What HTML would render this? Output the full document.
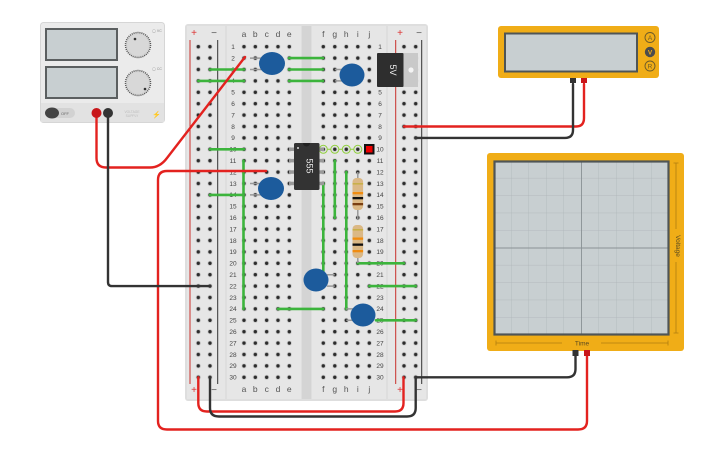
<!DOCTYPE html>
<html><head><meta charset="utf-8"><style>
html,body{margin:0;padding:0;background:#fff;}
svg{display:block;font-family:"Liberation Sans",sans-serif;}
</style></head><body>
<svg width="725" height="453" viewBox="0 0 725 453" xmlns="http://www.w3.org/2000/svg">
<defs>
<pattern id="pL" x="238.33" y="41" width="11.33" height="11.4" patternUnits="userSpaceOnUse"><circle cx="5.67" cy="5.7" r="2.6" fill="#d0d0d0"/><circle cx="5.67" cy="5.7" r="1.7" fill="#2b2b2b"/></pattern>
<pattern id="pR" x="317.55" y="41" width="11.5" height="11.4" patternUnits="userSpaceOnUse"><circle cx="5.75" cy="5.7" r="2.6" fill="#d0d0d0"/><circle cx="5.75" cy="5.7" r="1.7" fill="#2b2b2b"/></pattern>
<pattern id="pRail" x="192.45" y="41" width="11.7" height="11.4" patternUnits="userSpaceOnUse"><circle cx="5.85" cy="5.7" r="2.6" fill="#d0d0d0"/><circle cx="5.85" cy="5.7" r="1.7" fill="#2b2b2b"/></pattern>
<pattern id="pRail2" x="398.15" y="41" width="11.7" height="11.4" patternUnits="userSpaceOnUse"><circle cx="5.85" cy="5.7" r="2.6" fill="#d0d0d0"/><circle cx="5.85" cy="5.7" r="1.7" fill="#2b2b2b"/></pattern>
<pattern id="grid" x="494" y="161" width="17.5" height="17.4" patternUnits="userSpaceOnUse"><path d="M17.5 0V17.4M0 17.4H17.5" stroke="#adb4b7" stroke-width="0.7" fill="none"/></pattern>
</defs>

<!-- Power supply -->
<rect x="40.5" y="22.5" width="124" height="100" rx="3" fill="#ebebeb" stroke="#d6d6d6"/>
<rect x="41" y="103" width="123" height="19" fill="#e2e2e2"/>
<rect x="46" y="29" width="71" height="31" fill="#c8cfd1" stroke="#5b5f60" stroke-width="2"/>
<rect x="46" y="67" width="71" height="31" fill="#c8cfd1" stroke="#5b5f60" stroke-width="2"/>
<circle cx="138" cy="45" r="12.5" fill="#d4d4d4" stroke="#555" stroke-width="1.5" stroke-dasharray="1 1"/>
<circle cx="138" cy="45" r="10.5" fill="#d8d8d8"/>
<circle cx="135" cy="39" r="1.3" fill="#333"/>
<circle cx="138" cy="83" r="12.5" fill="#d4d4d4" stroke="#555" stroke-width="1.5" stroke-dasharray="1 1"/>
<circle cx="138" cy="83" r="10.5" fill="#d8d8d8"/>
<circle cx="145" cy="89" r="1.3" fill="#333"/>
<text x="152" y="32" font-size="3.5" fill="#888">◯ VC</text>
<text x="152" y="70" font-size="3.5" fill="#888">◯ CC</text>
<rect x="45" y="108" width="30" height="10" rx="5" fill="#d2d2d2"/>
<ellipse cx="52" cy="113" rx="7" ry="5.5" fill="#444"/>
<text x="61" y="115" font-size="4" fill="#666">OFF</text>
<text x="132" y="113" font-size="3.3" fill="#bbb" text-anchor="middle">VOLTAGE</text>
<text x="132" y="117" font-size="3.3" fill="#bbb" text-anchor="middle">SUPPLY</text>
<text x="152" y="117" font-size="7" fill="#bbb">⚡</text>

<!-- Multimeter -->
<rect x="498" y="26" width="161" height="52" rx="3" fill="#f0ad17"/>
<rect x="505" y="33.5" width="132" height="38" fill="#c8cfd1" stroke="#4f5556" stroke-width="2"/>
<circle cx="650" cy="37.5" r="5" fill="none" stroke="#6b5a2a" stroke-width="0.9"/>
<text x="650" y="40" font-size="6.5" text-anchor="middle" fill="#6b5a2a">A</text>
<circle cx="650" cy="52" r="5.2" fill="#4c4c4c"/>
<text x="650" y="54.5" font-size="6.5" text-anchor="middle" fill="#f0ad17" font-weight="bold">V</text>
<circle cx="650" cy="66" r="5" fill="none" stroke="#6b5a2a" stroke-width="0.9"/>
<text x="650" y="68.5" font-size="6.5" text-anchor="middle" fill="#6b5a2a">R</text>

<!-- Oscilloscope -->
<rect x="487" y="153" width="197" height="198" rx="3" fill="#f0ad17"/>
<rect x="494.5" y="161.5" width="174" height="173" fill="#c8cfd1"/>
<rect x="494.5" y="161.5" width="174" height="173" fill="url(#grid)"/>
<path d="M581.5 162V334M495 248H668" stroke="#8a9295" stroke-width="0.9"/>
<rect x="494.5" y="161.5" width="174" height="173" fill="none" stroke="#4f5556" stroke-width="2.2"/>
<path d="M496 343H562M601 343H668M496 340.5V345.5M668 340.5V345.5" stroke="#b07d10" stroke-width="0.8"/>
<text x="582" y="345.5" font-size="6.5" text-anchor="middle" fill="#5a4a20">Time</text>
<path d="M676 163V229M676 262V333M673.5 163H678.5M673.5 333H678.5" stroke="#b07d10" stroke-width="0.8"/>
<text x="676" y="246" font-size="6.5" text-anchor="middle" fill="#5a4a20" transform="rotate(90 676 246)">Voltage</text>

<!-- Breadboard -->
<rect x="185" y="24" width="243" height="377" rx="3" fill="#dedede"/>
<rect x="187" y="26" width="38" height="373" fill="#e6e6e6"/>
<rect x="227" y="26" width="74" height="373" fill="#e6e6e6"/>
<rect x="312" y="26" width="74" height="373" fill="#e6e6e6"/>
<rect x="388" y="26" width="38" height="373" fill="#e6e6e6"/>
<rect x="302" y="26" width="9" height="373" fill="#d4d4d4"/>
<path d="M190 40V384M395.7 40V384" stroke="#c9302c" stroke-width="1"/>
<path d="M217.7 40V384M421.7 40V384" stroke="#333" stroke-width="1"/>
<text x="194" y="36" font-size="10" fill="#d33" text-anchor="middle">+</text>
<text x="214" y="36" font-size="10" fill="#555" text-anchor="middle">−</text>
<text x="400" y="36" font-size="10" fill="#d33" text-anchor="middle">+</text>
<text x="419" y="36" font-size="10" fill="#555" text-anchor="middle">−</text>
<text x="194" y="393" font-size="10" fill="#d33" text-anchor="middle">+</text>
<text x="214" y="393" font-size="10" fill="#555" text-anchor="middle">−</text>
<text x="400" y="393" font-size="10" fill="#d33" text-anchor="middle">+</text>
<text x="419" y="393" font-size="10" fill="#555" text-anchor="middle">−</text>
<rect x="192" y="41" width="24" height="342" fill="url(#pRail)"/>
<rect x="398" y="41" width="24" height="342" fill="url(#pRail2)"/>
<rect x="238.3" y="41" width="56.7" height="342" fill="url(#pL)"/>
<rect x="317.5" y="41" width="57.5" height="342" fill="url(#pR)"/>
<g font-size="8.5" fill="#555" text-anchor="middle">
<text x="244" y="37">a</text><text x="255.3" y="37">b</text><text x="266.7" y="37">c</text><text x="278" y="37">d</text><text x="289.3" y="37">e</text>
<text x="323.3" y="37">f</text><text x="334.8" y="37">g</text><text x="346.3" y="37">h</text><text x="357.8" y="37">i</text><text x="369.3" y="37">j</text>
<text x="244" y="392">a</text><text x="255.3" y="392">b</text><text x="266.7" y="392">c</text><text x="278" y="392">d</text><text x="289.3" y="392">e</text>
<text x="323.3" y="392">f</text><text x="334.8" y="392">g</text><text x="346.3" y="392">h</text><text x="357.8" y="392">i</text><text x="369.3" y="392">j</text>
</g>
<g font-size="6.5" fill="#444" text-anchor="middle">
<text x="233" y="49">1</text><text x="233" y="60.4">2</text><text x="233" y="71.8">3</text><text x="233" y="83.2">4</text><text x="233" y="94.6">5</text><text x="233" y="106">6</text><text x="233" y="117.4">7</text><text x="233" y="128.8">8</text><text x="233" y="140.2">9</text><text x="233" y="151.6">10</text><text x="233" y="163">11</text><text x="233" y="174.4">12</text><text x="233" y="185.8">13</text><text x="233" y="197.2">14</text><text x="233" y="208.6">15</text><text x="233" y="220">16</text><text x="233" y="231.4">17</text><text x="233" y="242.8">18</text><text x="233" y="254.2">19</text><text x="233" y="265.6">20</text><text x="233" y="277">21</text><text x="233" y="288.4">22</text><text x="233" y="299.8">23</text><text x="233" y="311.2">24</text><text x="233" y="322.6">25</text><text x="233" y="334">26</text><text x="233" y="345.4">27</text><text x="233" y="356.8">28</text><text x="233" y="368.2">29</text><text x="233" y="379.6">30</text>
<text x="380" y="49">1</text><text x="380" y="60.4">2</text><text x="380" y="71.8">3</text><text x="380" y="83.2">4</text><text x="380" y="94.6">5</text><text x="380" y="106">6</text><text x="380" y="117.4">7</text><text x="380" y="128.8">8</text><text x="380" y="140.2">9</text><text x="380" y="151.6">10</text><text x="380" y="163">11</text><text x="380" y="174.4">12</text><text x="380" y="185.8">13</text><text x="380" y="197.2">14</text><text x="380" y="208.6">15</text><text x="380" y="220">16</text><text x="380" y="231.4">17</text><text x="380" y="242.8">18</text><text x="380" y="254.2">19</text><text x="380" y="265.6">20</text><text x="380" y="277">21</text><text x="380" y="288.4">22</text><text x="380" y="299.8">23</text><text x="380" y="311.2">24</text><text x="380" y="322.6">25</text><text x="380" y="334">26</text><text x="380" y="345.4">27</text><text x="380" y="356.8">28</text><text x="380" y="368.2">29</text><text x="380" y="379.6">30</text>
</g>

<!-- Green wires -->
<g stroke="#3cb43c" stroke-width="2.6" stroke-linecap="round" fill="none">
<path d="M289 58.1H323"/><path d="M210 69.5H244M289 69.5H323"/><path d="M198.3 80.9H244M289 80.9H323"/>
<path d="M210 149.3H244"/><path d="M210 194.9H243.5"/><path d="M243.5 160.7V308.9"/>
<path d="M323.3 183.5V272"/><path d="M334.8 160.7V217.7"/><path d="M346.3 172.1V308.9"/>
<path d="M278 308.9H323.3"/><path d="M357.8 263.3H404"/><path d="M369.3 286.1H415.7"/><path d="M376 320.3H415.7"/>
</g>

<!-- LED row markers -->
<g fill="none" stroke="#8fcf3c" stroke-width="1"><circle cx="323.3" cy="149.3" r="4"/><circle cx="334.8" cy="149.3" r="4"/><circle cx="346.3" cy="149.3" r="4"/><circle cx="357.8" cy="149.3" r="4"/>
<path d="M327.3 149.3H330.8M338.8 149.3H342.3M350.3 149.3H353.8"/></g>
<rect x="364" y="144" width="10.5" height="10.5" fill="#111"/><rect x="366" y="146" width="6.5" height="6.5" fill="#e00"/>

<!-- 555 -->
<g fill="#9a9a9a"><rect x="289" y="147.5" width="6" height="3.5"/><rect x="289" y="158.9" width="6" height="3.5"/><rect x="289" y="170.3" width="6" height="3.5"/><rect x="289" y="181.7" width="6" height="3.5"/>
<rect x="318" y="147.5" width="6" height="3.5"/><rect x="318" y="158.9" width="6" height="3.5"/><rect x="318" y="170.3" width="6" height="3.5"/><rect x="318" y="181.7" width="6" height="3.5"/></g>
<rect x="294" y="143" width="25.5" height="47" rx="1.5" fill="#333"/>
<path d="M303 143a3.5 3.5 0 0 0 7 0z" fill="#222"/>
<circle cx="298" cy="148" r="1" fill="#ddd"/>
<text x="306.7" y="166" font-size="9" fill="#eee" text-anchor="middle" transform="rotate(90 306.7 166)">555</text>

<!-- Resistors -->
<path d="M357.8 172V219M357.8 227V263" stroke="#999" stroke-width="1.5"/>
<g>
<rect x="352.5" y="178" width="10.6" height="32" rx="4" fill="#dbb885"/>
<rect x="352.5" y="183" width="10.6" height="1.6" fill="#c8b04a"/><rect x="352.5" y="192" width="10.6" height="2.3" fill="#f08c10"/><rect x="352.5" y="197" width="10.6" height="2.3" fill="#111"/><rect x="352.5" y="203" width="10.6" height="2.3" fill="#7a3f12"/>
<rect x="352.5" y="225" width="10.6" height="33" rx="4" fill="#dbb885"/>
<rect x="352.5" y="229" width="10.6" height="1.6" fill="#c8b04a"/><rect x="352.5" y="237.5" width="10.6" height="2.3" fill="#f08c10"/><rect x="352.5" y="243.5" width="10.6" height="2.3" fill="#111"/><rect x="352.5" y="250" width="10.6" height="2.3" fill="#f08c10"/>
</g>

<!-- Capacitors -->
<g stroke="#999" stroke-width="1.5"><path d="M250 58.1H262M250 69.5H262"/><path d="M334.8 69.5H342M334.8 80.9H342"/><path d="M250 183.5H262M250 194.9H262"/><path d="M327 274.7H334.8M327 286.1H334.8"/><path d="M346.3 308.9H355M346.3 320.3H355"/></g>
<g fill="#1c5b9c">
<ellipse cx="272" cy="63.5" rx="13" ry="11.5"/>
<ellipse cx="352" cy="75" rx="12.5" ry="11.5"/>
<ellipse cx="271" cy="188.5" rx="13" ry="11.5"/>
<ellipse cx="316" cy="280" rx="12.5" ry="11.5"/>
<ellipse cx="363" cy="315" rx="12.5" ry="11.5"/>
</g>

<!-- Regulator -->
<rect x="403" y="53" width="15" height="34" fill="#c9c9c9"/><circle cx="411" cy="70" r="2.6" fill="#f4f4f4"/>
<rect x="377" y="53" width="26.5" height="34" rx="1" fill="#2e2e2e"/>
<text x="390" y="70" font-size="9" fill="#eee" text-anchor="middle" transform="rotate(90 390 70)">5V</text>

<!-- Wires -->
<g fill="none" stroke-width="2.4" stroke-linecap="round" stroke-linejoin="round">
<path d="M96.5 113V158Q96.5 167.5 106 167.5H150Q160 167.5 167 158L245 57" stroke="#e3221f"/>
<path d="M266 171H167Q158 171 158 180V421Q158 429.5 167 429.5H578Q587 429.5 587 421V356" stroke="#e3221f"/>
<path d="M404 126.5H576Q584 126.5 584 118V84" stroke="#e3221f"/>
<path d="M415.7 137.9H565Q573 137.9 573 130V84" stroke="#333"/>
<path d="M108 113V282Q108 286.1 112 286.1H210" stroke="#333"/>
<path d="M198.3 377.3V403Q198.3 411.5 207 411.5H395Q403.5 411.5 403.5 403V377.3" stroke="#e3221f"/>
<path d="M210 377.3V408Q210 416.5 219 416.5H407Q415.7 416.5 415.7 408V377.3H567Q575.5 377.3 575.5 369V356" stroke="#333"/>
</g>
<circle cx="96.5" cy="113" r="5" fill="#c8161a"/><circle cx="108" cy="113" r="5" fill="#333"/>
<rect x="570" y="78" width="6" height="5" fill="#333"/><rect x="581" y="78" width="6" height="5" fill="#c8161a"/>
<rect x="572.5" y="350" width="6" height="6" fill="#333"/><rect x="584" y="350" width="6" height="6" fill="#c8161a"/>
</svg>
</body></html>
